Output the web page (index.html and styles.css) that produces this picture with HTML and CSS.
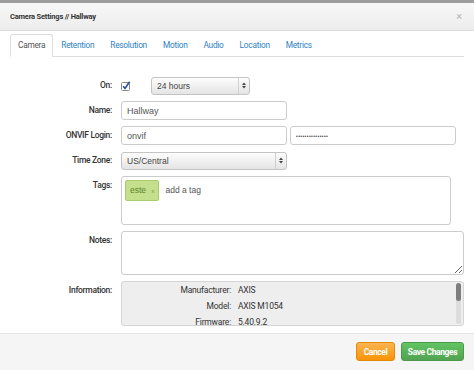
FILE: index.html
```html
<!DOCTYPE html>
<html lang="en">
<head>
    <meta charset="UTF-8">
    <meta name="viewport" content="width=device-width, initial-scale=1.0">
    <title>Camera Settings</title>
    <link rel="stylesheet" href="styles.css">
</head>
<body>
    <div class="modal">
        <div class="modal-header">
            <h3>Camera Settings // Hallway</h3>
            <span class="close">&times;</span>
        </div>

        <div class="modal-body">
            <ul class="tabs">
                <li class="active">Camera</li>
                <li>Retention</li>
                <li>Resolution</li>
                <li>Motion</li>
                <li>Audio</li>
                <li>Location</li>
                <li>Metrics</li>
            </ul>

            <div class="form">
                <label>On:</label>
                <div class="row">
                    <svg class="check" width="10" height="10" viewBox="0 0 10 10">
                        <rect x="0.5" y="1.5" width="8" height="8" rx="1" fill="#fff" stroke="#8a8a8a"/>
                        <path d="M2.2 5.2 L4 7.4 L8.6 0.8" fill="none" stroke="#2b4f9e" stroke-width="1.6"/>
                    </svg>
                    <div class="select short">
                        <span>24 hours</span>
                        <span class="arrows"><svg width="4" height="7" viewBox="0 0 4 7"><path d="M0 3 L2 0.5 L4 3 Z M0 4 L2 6.5 L4 4 Z" fill="#444"/></svg></span>
                    </div>
                </div>

                <label>Name:</label>
                <div class="row">
                    <input class="field" type="text" value="Hallway">
                </div>

                <label>ONVIF Login:</label>
                <div class="row">
                    <input class="field" type="text" value="onvif">
                    <input class="field dots" type="text" value="•••••••••••••••">
                </div>

                <label>Time Zone:</label>
                <div class="row">
                    <div class="select wide">
                        <span>US/Central</span>
                        <span class="arrows"><svg width="4" height="7" viewBox="0 0 4 7"><path d="M0 3 L2 0.5 L4 3 Z M0 4 L2 6.5 L4 4 Z" fill="#444"/></svg></span>
                    </div>
                </div>

                <label>Tags:</label>
                <div class="tags">
                    <span class="tag">este <span class="x">x</span></span>
                    <span class="add">add a tag</span>
                </div>

                <label>Notes:</label>
                <textarea class="notes"></textarea>

                <label>Information:</label>
                <div class="info">
                    <div class="info-grid">
                        <span class="k">Manufacturer:</span><span>AXIS</span>
                        <span class="k">Model:</span><span>AXIS M1054</span>
                        <span class="k">Firmware:</span><span>5.40.9.2</span>
                    </div>
                    <div class="scroll"><div class="thumb"></div></div>
                </div>
            </div>
        </div>

        <div class="modal-footer">
            <button class="btn cancel">Cancel</button>
            <button class="btn save">Save Changes</button>
        </div>
    </div>
</body>
</html>
```

FILE: styles.css
```css
body {
    margin: 0;
    background: #fff;
    font-family: Roboto, "Liberation Sans", sans-serif;
    color: #333;
}
.modal {
    height: 370px;
    border-top: 3px solid #9d9d9d;
    box-sizing: border-box;
    display: flex;
    flex-direction: column;
}
.modal-header {
    height: 27px;
    padding: 0 10px;
    display: flex;
    align-items: center;
    justify-content: space-between;
    background: linear-gradient(#f8f8f8, #ececec);
    border-bottom: 1px solid #dcdcdc;
}
.modal-header h3 {
    margin: 0;
    font-size: 7.5px;
    font-weight: 700;
    letter-spacing: -0.2px;
    color: #333;
}
.close {
    font-size: 11px;
    color: #b5b5b5;
    margin-right: 2px;
}
.modal-body {
    flex: 1;
    padding: 3px 10px 0;
}
.tabs {
    list-style: none;
    margin: 0;
    padding: 0;
    display: flex;
    height: 22px;
    border-bottom: 1px solid #ddd;
}
.tabs li {
    padding: 0 8px;
    line-height: 22px;
    font-size: 8.3px;
    letter-spacing: -0.25px;
    color: #2f7fc4;
}
.tabs li.active {
    color: #555;
    background: #fff;
    border: 1px solid #ddd;
    border-bottom-color: #fff;
    border-radius: 3px 3px 0 0;
    padding: 0 7px;
    margin-bottom: -1px;
    line-height: 21px;
}
.form {
    display: grid;
    grid-template-columns: 102px 1fr;
    column-gap: 9px;
    row-gap: 6px;
    padding-top: 19px;
}
.form label {
    text-align: right;
    font-size: 8.5px;
    font-weight: 500;
    letter-spacing: -0.3px;
    line-height: 19px;
    color: #333;
}
.row {
    display: flex;
    align-items: center;
    gap: 3px;
    height: 19px;
}
.check {
    margin-right: 17px;
}
.field {
    width: 166px;
    height: 19px;
    box-sizing: border-box;
    border: 1px solid #ccc;
    border-radius: 3px;
    padding: 0 5px;
    font-family: "Liberation Sans", sans-serif;
    font-size: 9px;
    color: #555;
    background: #fff;
    outline: none;
}
.dots {
    font-size: 5px;
    letter-spacing: 0.4px;
    color: #444;
}
.select {
    height: 18px;
    box-sizing: border-box;
    border: 1px solid #c4c4c4;
    border-radius: 3px;
    background: linear-gradient(#fdfdfd, #e4e4e4);
    display: flex;
    align-items: center;
    justify-content: space-between;
    padding-left: 5px;
    font-family: "Liberation Sans", sans-serif;
    font-size: 8.5px;
    color: #444;
}
.select.short {
    width: 99px;
}
.select.wide {
    width: 166px;
}
.arrows {
    height: 100%;
    width: 10px;
    border-left: 1px solid #d0d0d0;
    display: flex;
    align-items: center;
    justify-content: center;
}
.tags {
    width: 330px;
    height: 49px;
    box-sizing: border-box;
    border: 1px solid #ccc;
    border-radius: 3px;
    padding: 3px;
    display: flex;
    align-items: flex-start;
    font-family: "Liberation Sans", sans-serif;
    font-size: 8.5px;
}
.tag {
    background: #c4e08c;
    border: 1px solid #a8cc68;
    border-radius: 2px;
    color: #60822c;
    padding: 0 4px;
    line-height: 18px;
}
.tag .x {
    font-size: 6px;
    margin-left: 3px;
    color: #7a9a45;
}
.add {
    margin-left: 6px;
    line-height: 20px;
    color: #555;
}
.notes {
    width: 343px;
    height: 44px;
    box-sizing: border-box;
    border: 1px solid #ccc;
    border-radius: 3px;
    margin: 0;
    resize: both;
    outline: none;
}
.info {
    width: 343px;
    height: 45px;
    box-sizing: border-box;
    border: 1px solid #d5d5d5;
    border-radius: 3px;
    background: #eee;
    display: flex;
    justify-content: space-between;
}
.info-grid {
    display: grid;
    grid-template-columns: 109px auto;
    column-gap: 7px;
    grid-auto-rows: 16px;
    align-items: center;
    font-size: 8.5px;
    letter-spacing: -0.2px;
    color: #333;
}
.info-grid .k {
    text-align: right;
}
.scroll {
    width: 5px;
    margin: 1px 2px 1px 0;
    background: #dcdcdc;
    border-radius: 3px;
}
.thumb {
    height: 18px;
    background: #7d7d7d;
    border-radius: 3px;
}
.modal-footer {
    height: 37px;
    box-sizing: border-box;
    margin-top: 6px;
    padding: 8px 10px 0 0;
    background: #f5f5f5;
    border-top: 1px solid #e6e6e6;
    display: flex;
    align-items: flex-start;
    justify-content: flex-end;
    gap: 6px;
}
.btn {
    height: 19px;
    border: 1px solid;
    border-radius: 3px;
    color: #fff;
    font-family: Roboto, sans-serif;
    font-size: 8.5px;
    font-weight: 700;
    letter-spacing: -0.4px;
    padding: 0 5px;
    white-space: nowrap;
}
.cancel {
    width: 39px;
    background: linear-gradient(#fbb450, #f89406);
    border-color: #e38a06;
}
.save {
    width: 63px;
    background: linear-gradient(#62c462, #51a351);
    border-color: #4a9a4a;
}
```
